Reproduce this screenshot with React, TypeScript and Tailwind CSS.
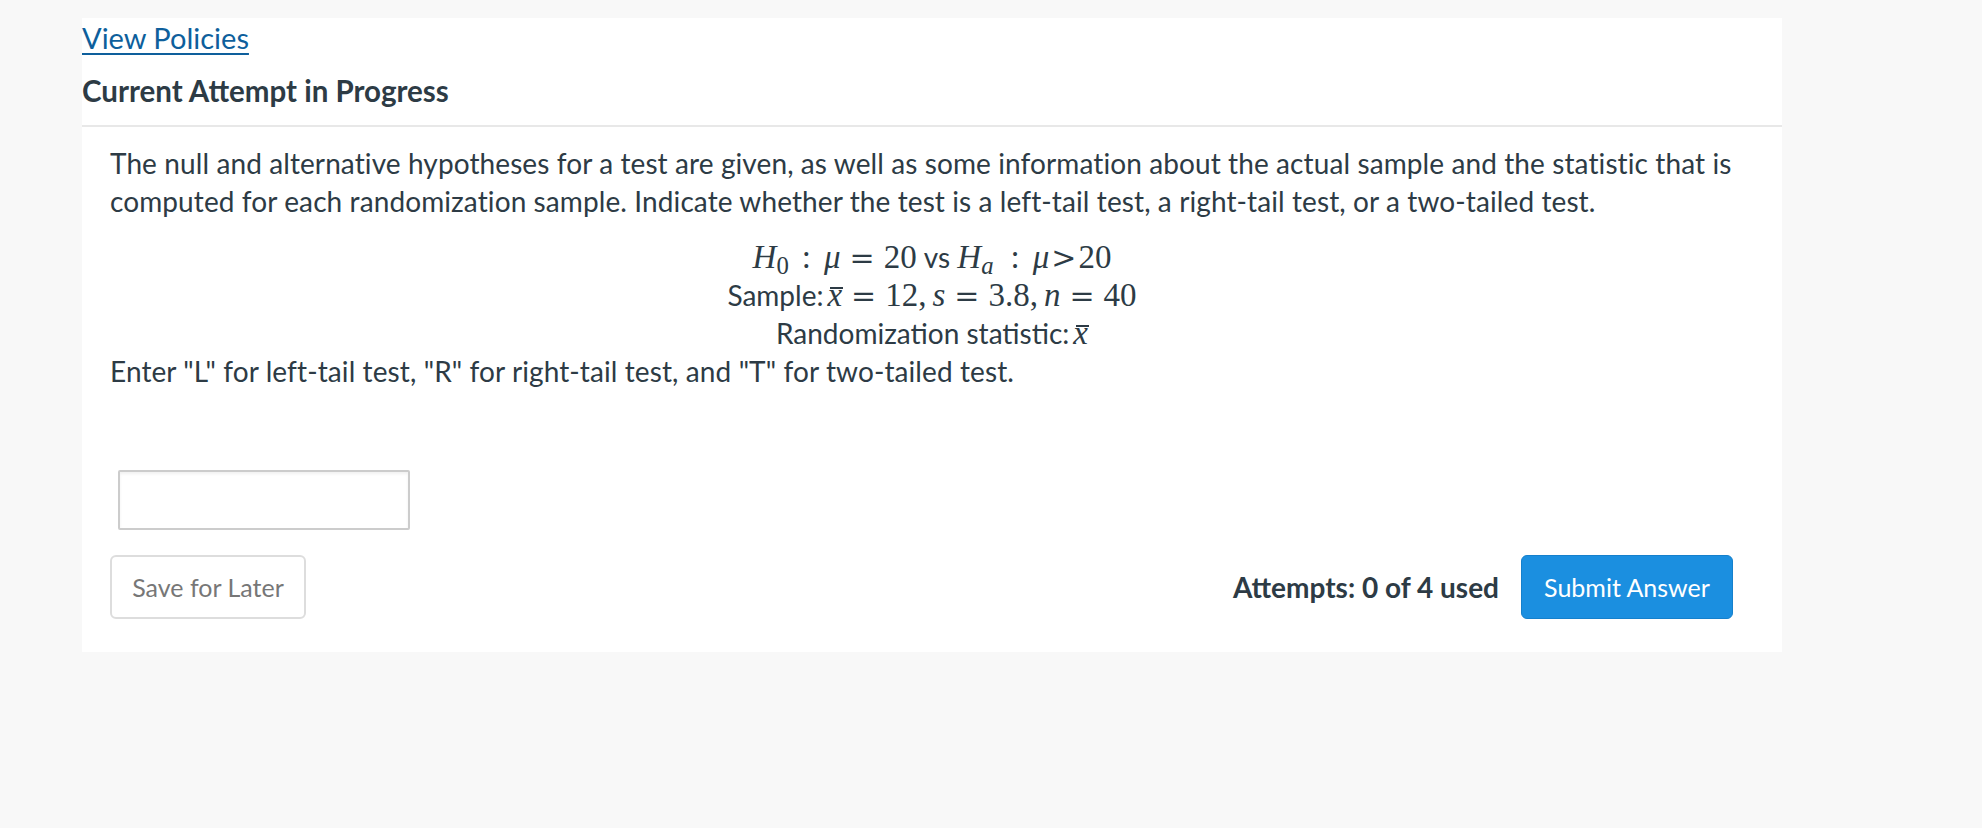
const serif = "font-['Liberation_Serif',serif] text-[33px] leading-[0]";
const wideSym = "font-['DejaVu_Serif',serif] text-[30px] leading-[0]";

function XBar() {
  return (
    <span className="relative inline-block leading-[36px]">
      <i>x</i>
      <span className="absolute left-[3px] right-[-1px] top-[10px] h-[1.5px] bg-[#2d3b45]" />
    </span>
  );
}

// relation symbol with TeX-like thick spacing
function Rel({ children, wide = true }: { children: React.ReactNode; wide?: boolean }) {
  return <span className={wide ? `mx-[9px] ${wideSym}` : 'mx-[13px]'}>{children}</span>;
}

export default function App() {
  return (
    <div className="min-h-screen bg-[#f8f8f8] pt-[18px] font-['Lato','Liberation_Sans',sans-serif] text-[#2d3b45]">
      <div className="ml-[82px] w-[1700px] bg-white pb-[33px]">
        <div className="pt-[4px]">
          <a href="#" className="text-[29px] leading-[32px] text-[#0e5f9c] underline underline-offset-[4px] decoration-[2px]">
            View Policies
          </a>
          <h2 className="mt-[20px] text-[29.5px] font-bold leading-[32px]">Current Attempt in Progress</h2>
        </div>
        <div className="mt-[18px] h-[2px] bg-[#e8e8e8]" />

        <div className="pl-[28px] pr-[28px] pt-[17px] text-[28px] leading-[38px]">
          <p className="tracking-[0.1px]">
            The null and alternative hypotheses for a test are given, as well as some information about the actual
            sample and the statistic that is computed for each randomization sample. Indicate whether the test is a
            left-tail test, a right-tail test, or a two-tailed test.
          </p>

          <div className="mt-[18px] text-center">
            <div>
              <span className={serif}>
                <i>H</i>
                <sub className="not-italic">0</sub>
                <Rel wide={false}>:</Rel>
                <i>μ</i>
                <Rel>=</Rel>20
              </span>{' '}
              vs{' '}
              <span className={serif}>
                <i>H</i>
                <sub>
                  <i>a</i>
                </sub>
                <span className="ml-[4px]" />
                <Rel wide={false}>:</Rel>
                <i>μ</i>
                <span className={`mx-[2px] ${wideSym}`}>&gt;</span>20
              </span>
            </div>
            <div>
              Sample:
              <span className={`${serif} ml-[4px]`}>
                <XBar />
                <Rel>=</Rel>12,<span className="ml-[6px]" />
                <i>s</i>
                <Rel>=</Rel>3.8,<span className="ml-[6px]" />
                <i>n</i>
                <Rel>=</Rel>40
              </span>
            </div>
            <div>
              Randomization statistic:
              <span className={`${serif} ml-[4px]`}>
                <XBar />
              </span>
            </div>
          </div>

          <p className="tracking-[0.1px]">
            Enter "L" for left-tail test, "R" for right-tail test, and "T" for two-tailed test.
          </p>

          <div className="mt-[80px] pl-[8px]">
            <input
              type="text"
              className="h-[60px] w-[292px] rounded-[2px] border-2 border-[#cccccc] bg-white shadow-[inset_0_2px_3px_rgba(0,0,0,0.06)] outline-none"
            />
          </div>

          <div className="mt-[25px] flex items-center justify-between pr-[21px]">
            <button className="h-[64px] w-[196px] rounded-[6px] border-2 border-[#dddddd] bg-white text-[25px] text-[#777777]">
              Save for Later
            </button>
            <div className="flex items-center gap-[22px]">
              <span className="text-[28px] font-bold">Attempts: 0 of 4 used</span>
              <button className="h-[64px] w-[212px] rounded-[6px] border border-[#1580cc] bg-[#1b8fe0] text-[25px] text-white">
                Submit Answer
              </button>
            </div>
          </div>
        </div>
      </div>
    </div>
  );
}
